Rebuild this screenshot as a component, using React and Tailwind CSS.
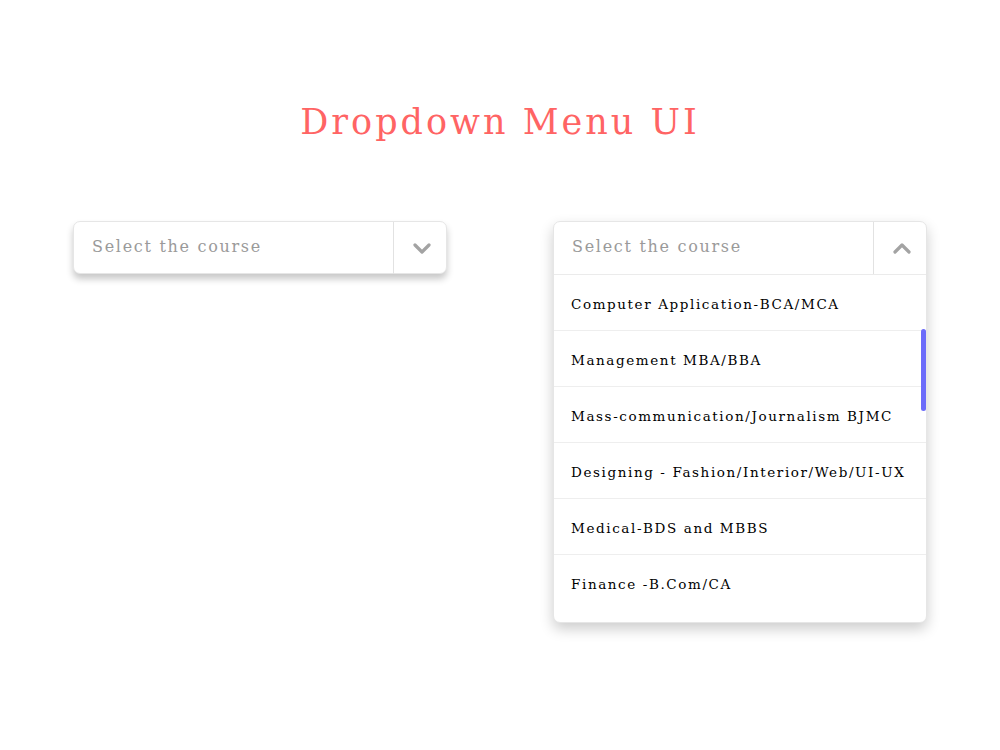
import React from "react";

const courses = [
  "Computer Application-BCA/MCA",
  "Management MBA/BBA",
  "Mass-communication/Journalism BJMC",
  "Designing - Fashion/Interior/Web/UI-UX",
  "Medical-BDS and MBBS",
  "Finance -B.Com/CA",
];

function Chevron({ up }) {
  return (
    <svg width="18" height="12" viewBox="0 0 18 12" fill="none">
      <polyline
        points={up ? "2,10 9,3 16,10" : "2,3 9,10 16,3"}
        stroke="#a3a3a3"
        strokeWidth="3.2"
        strokeLinecap="round"
        strokeLinejoin="round"
      />
    </svg>
  );
}

function Header({ up }) {
  return (
    <div className="flex h-[52px] items-stretch">
      <div className="flex flex-1 items-center pb-[2px] pl-[18px] text-[16px] tracking-[1.7px] text-[#9a9a9a]">
        Select the course
      </div>
      <div className="flex w-[53px] items-center justify-center border-l border-[#e2e2e2] pl-[3px]">
        <Chevron up={up} />
      </div>
    </div>
  );
}

export default function App() {
  return (
    <div className="h-[750px] w-[1000px] bg-white" style={{ fontFamily: '"DejaVu Serif", serif' }}>
      <h1 className="pt-[99px] text-center text-[35px] leading-[46px] tracking-[3px] text-[#ff6464]">
        Dropdown Menu UI
      </h1>

      <div className="mt-[76px] flex gap-[106px] pl-[73px]">
        <div className="h-[53px] w-[374px] rounded-[7px] border border-[#e6e6e6] bg-white shadow-[0_5px_7px_rgba(0,0,0,0.22)]">
          <Header />
        </div>

        <div className="relative w-[374px] overflow-hidden rounded-[7px] border border-[#e6e6e6] bg-white pb-[11px] shadow-[0_6px_14px_rgba(0,0,0,0.2)]">
          <div className="border-b border-[#ebebeb]">
            <Header up />
          </div>
          {courses.map((c, i) => (
            <div
              key={c}
              className={`flex h-[56px] items-center pl-[17px] pt-[3px] text-[13.5px] tracking-[1.6px] text-black ${
                i < courses.length - 1 ? "border-b border-[#eeeeee]" : ""
              }`}
            >
              {c}
            </div>
          ))}
          <div className="absolute right-0 top-[107px] h-[82px] w-[5px] rounded-full bg-[#6b6bfa]" />
        </div>
      </div>
    </div>
  );
}
